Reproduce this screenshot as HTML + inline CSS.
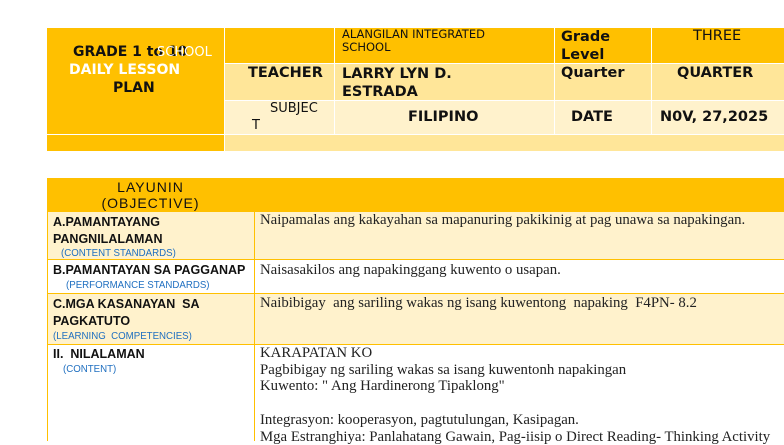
<!DOCTYPE html>
<html><head><meta charset="utf-8"><style>
body{margin:0;width:784px;height:441px;overflow:hidden;background:#fff;position:relative;font-family:"DejaVu Sans",sans-serif}
.b{position:absolute;box-sizing:border-box}
.t{position:absolute;white-space:nowrap}
.bd{font-weight:bold}
.s{font-family:"Liberation Serif",serif;font-size:14.8px;color:#222}
.l{font-family:"Liberation Sans",sans-serif;font-weight:bold;font-size:12.5px;color:#111}
.bl{font-family:"Liberation Sans",sans-serif;font-size:9.7px;color:#1f6fc0}
</style></head><body>
<div class="b" style="left:47px;top:28px;width:177px;height:106px;background:#FFC000"></div>
<div class="b" style="left:225px;top:28px;width:109px;height:35px;background:#FFC000"></div>
<div class="b" style="left:335px;top:28px;width:219px;height:35px;background:#FFC000"></div>
<div class="b" style="left:555px;top:28px;width:96px;height:35px;background:#FFC000"></div>
<div class="b" style="left:652px;top:28px;width:132px;height:35px;background:#FFC000"></div>
<div class="b" style="left:225px;top:64px;width:109px;height:36px;background:#FFE699"></div>
<div class="b" style="left:335px;top:64px;width:219px;height:36px;background:#FFE699"></div>
<div class="b" style="left:555px;top:64px;width:96px;height:36px;background:#FFE699"></div>
<div class="b" style="left:652px;top:64px;width:132px;height:36px;background:#FFE699"></div>
<div class="b" style="left:225px;top:101px;width:109px;height:33px;background:#FFF2CC"></div>
<div class="b" style="left:335px;top:101px;width:219px;height:33px;background:#FFF2CC"></div>
<div class="b" style="left:555px;top:101px;width:96px;height:33px;background:#FFF2CC"></div>
<div class="b" style="left:652px;top:101px;width:132px;height:33px;background:#FFF2CC"></div>
<div class="b" style="left:47px;top:135px;width:177px;height:16px;background:#FFC000"></div>
<div class="b" style="left:225px;top:135px;width:559px;height:16px;background:#FFE699"></div>

<div class="t bd" style="left:73px;top:44px;font-size:14px;color:#111">GRADE 1 to 10</div>
<div class="t" style="left:157px;top:45px;font-size:13px;color:#fff">SCHOOL</div>
<div class="t bd" style="left:69px;top:62px;font-size:14px;color:#fff">DAILY LESSON</div>
<div class="t bd" style="left:113px;top:80px;font-size:14px;color:#111">PLAN</div>
<div class="t" style="left:342px;top:28px;font-size:11.5px;color:#111;line-height:13px">ALANGILAN INTEGRATED<br>SCHOOL</div>
<div class="t bd" style="left:561px;top:28px;font-size:14.5px;line-height:18px;color:#111">Grade<br>Level</div>
<div class="t" style="left:693px;top:28px;font-size:14.5px;color:#111">THREE</div>
<div class="t bd" style="left:248px;top:65px;font-size:14.5px;color:#111">TEACHER</div>
<div class="t bd" style="left:342px;top:65px;font-size:14.5px;line-height:18px;color:#111">LARRY LYN D.<br>ESTRADA</div>
<div class="t bd" style="left:561px;top:65px;font-size:14.5px;color:#111">Quarter</div>
<div class="t bd" style="left:677px;top:65px;font-size:14.5px;color:#111">QUARTER</div>
<div class="t" style="left:270px;top:101px;font-size:13px;color:#111">SUBJEC</div>
<div class="t" style="left:252px;top:118px;font-size:13px;color:#111">T</div>
<div class="t bd" style="left:408px;top:109px;font-size:14.5px;color:#111">FILIPINO</div>
<div class="t bd" style="left:571px;top:109px;font-size:14.5px;color:#111">DATE</div>
<div class="t bd" style="left:660px;top:109px;font-size:14.5px;color:#111">N0V, 27,2025</div>

<div class="b" style="left:47px;top:178px;width:737px;height:34px;background:#FFC000"></div>
<div class="t" style="left:47px;top:179px;width:207px;text-align:center;font-family:'Liberation Sans',sans-serif;font-size:14px;line-height:16px;color:#111;letter-spacing:1px">LAYUNIN<br>(OBJECTIVE)</div>
<div class="b" style="left:47px;top:212px;width:737px;height:48px;background:#FFF2CC;border-bottom:1px solid #FFC000"></div>
<div class="b" style="left:47px;top:260px;width:737px;height:34px;border-bottom:1px solid #FFC000"></div>
<div class="b" style="left:47px;top:294px;width:737px;height:51px;background:#FFF2CC;border-bottom:1px solid #FFC000"></div>
<div class="b" style="left:47px;top:212px;width:1px;height:229px;background:#FFC000"></div>
<div class="b" style="left:254px;top:212px;width:1px;height:229px;background:#FFC000"></div>

<div class="t l" style="left:53px;top:214px;line-height:17px">A.PAMANTAYANG<br>PANGNILALAMAN</div>
<div class="t bl" style="left:61px;top:248px">(CONTENT STANDARDS)</div>
<div class="t l" style="left:53px;top:263px">B.PAMANTAYAN SA PAGGANAP</div>
<div class="t bl" style="left:66px;top:280px">(PERFORMANCE STANDARDS)</div>
<div class="t l" style="left:53px;top:296px;line-height:17px">C.MGA KASANAYAN&nbsp; SA<br>PAGKATUTO</div>
<div class="t bl" style="left:53px;top:331px">(LEARNING&nbsp; COMPETENCIES)</div>
<div class="t l" style="left:53px;top:347px">II.&nbsp; NILALAMAN</div>
<div class="t bl" style="left:63px;top:364px">(CONTENT)</div>

<div class="t s" style="left:260px;top:212px">Naipamalas ang kakayahan sa mapanuring pakikinig at pag unawa sa napakingan.</div>
<div class="t s" style="left:260px;top:262px">Naisasakilos ang napakinggang kuwento o usapan.</div>
<div class="t s" style="left:260px;top:295px">Naibibigay&nbsp; ang sariling wakas ng isang kuwentong&nbsp; napaking&nbsp; F4PN- 8.2</div>
<div class="t s" style="left:260px;top:345px;line-height:16.7px">KARAPATAN KO<br>Pagbibigay ng sariling wakas sa isang kuwentonh napakingan<br>Kuwento: " Ang Hardinerong Tipaklong"<br><br>Integrasyon: kooperasyon, pagtutulungan, Kasipagan.<br>Mga Estranghiya: Panlahatang Gawain, Pag-iisip o Direct Reading- Thinking Activity</div>
</body></html>
